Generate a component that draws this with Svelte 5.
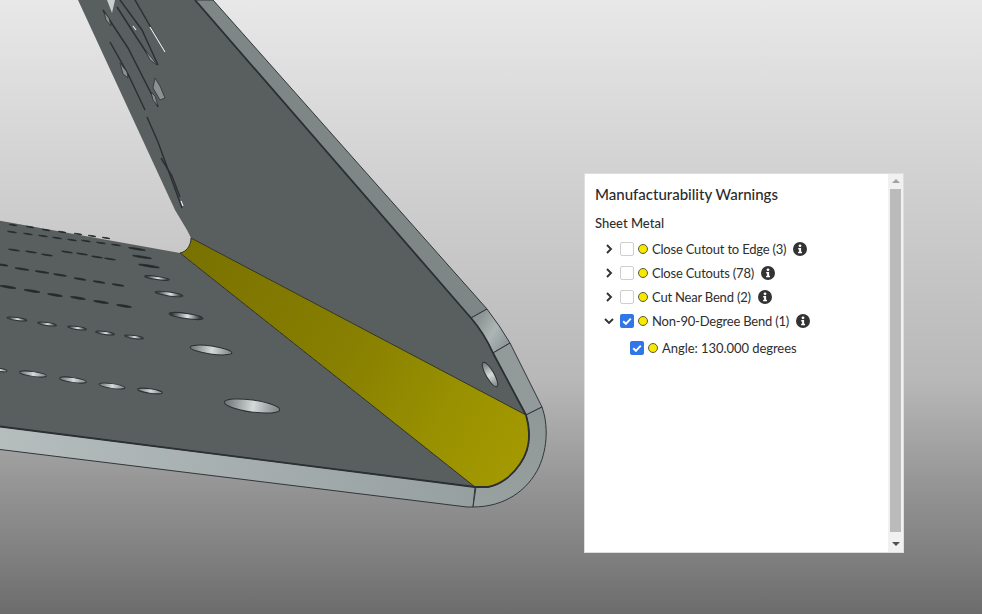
<script>
  // wider holes in the flat plate: [cx, cy, rx, ry]
  const bigHoles = [
    [252, 406, 28, 6],
    [211, 350, 21, 4],
    [33, 374, 13.5, 2.4],
    [73, 380, 13.5, 2.4],
    [112, 386, 13, 2.4],
    [150, 391, 12.5, 2.2],
    [0, 370, 7, 1.6]
  ];

  // narrow ones, mostly dark with a bright streak
  const thinHoles = [
    [186, 316, 17, 2.6],
    [169, 294, 14, 1.9],
    [157, 278, 12.5, 1.6],
    [17, 319, 10, 1.5],
    [47, 324, 9.5, 1.5],
    [77, 328, 9.5, 1.5],
    [105, 333, 9.5, 1.5],
    [134, 337, 9.5, 1.5]
  ];

  const slits = [
    [149, 266, 10.5, 0.9],
    [142, 257, 9.5, 0.8],
    [137, 249, 8.5, 0.7],
    [124, 306, 7.5, 0.9],
    [101, 302, 7.5, 0.9],
    [78, 298, 7.5, 0.9],
    [55, 295, 7.5, 0.9],
    [32, 291, 8, 0.9],
    [8, 287, 8, 0.9],
    [118, 285, 6, 0.7],
    [99, 282, 6, 0.7],
    [80, 279, 6, 0.7],
    [60, 275, 6.5, 0.7],
    [42, 272, 7, 0.7],
    [22, 269, 7, 0.7],
    [3, 265, 5, 0.7],
    [110, 259, 5.5, 0.5],
    [97, 257, 5.5, 0.5],
    [82, 254, 5.5, 0.5],
    [67, 252, 5.5, 0.5],
    [47, 255, 5.5, 0.5],
    [31, 252, 5.5, 0.5],
    [14, 250, 5.5, 0.5],
    [116, 245, 4.5, 0.4],
    [101, 243, 4.5, 0.4],
    [86, 241, 4.5, 0.4],
    [72, 240, 4.5, 0.4],
    [57, 238, 4.5, 0.4],
    [43, 236, 4.5, 0.4],
    [28, 234, 4.5, 0.4],
    [12, 232, 4.5, 0.4],
    [106, 238, 4, 0.4],
    [92, 236, 4, 0.4],
    [78, 234, 4, 0.4],
    [62, 232, 4, 0.4],
    [46, 230, 4, 0.4],
    [30, 227, 4, 0.4],
    [13, 225, 4, 0.4]
  ];

  // cut-outs seen edge-on in the raised flange
  const cutLines = [
    "M120 0 L142 30 L158 65",
    "M117 7 L135 35 L150 58",
    "M103 10 L128 48 L158 107",
    "M110 42 L128 74 L145 110",
    "M147 117 L158 142 L182 208",
    "M161 158 L172 176 L180 197",
    "M135 0 L165 52"
  ];

  const cutBlobs = [
    "M155 78 L160 86 L165 98 L160 100 L153 88 Z",
    "M120 63 L127 72 L128 78 L123 74 Z",
    "M145 50 L152 58 L157 65 L150 60 Z",
    "M104 12 L109 18 L111 26 L106 20 Z",
    "M151 92 L155 96 L158 106 L153 100 Z"
  ];

  const warnings = [
    { label: "Close Cutout to Edge (3)", open: false, checked: false },
    { label: "Close Cutouts (78)", open: false, checked: false },
    { label: "Cut Near Bend (2)", open: false, checked: false },
    { label: "Non-90-Degree Bend (1)", open: true, checked: true }
  ];
</script>

<div class="viewport">
  <svg class="scene" width="982" height="614" viewBox="0 0 982 614" xmlns="http://www.w3.org/2000/svg">
    <defs>
      <linearGradient id="yellow" gradientUnits="userSpaceOnUse" x1="190" y1="250" x2="520" y2="440">
        <stop offset="0" stop-color="#7a7200" />
        <stop offset="0.5" stop-color="#888000" />
        <stop offset="0.78" stop-color="#989000" />
        <stop offset="1" stop-color="#a39800" />
      </linearGradient>
      <linearGradient id="hole" x1="0" y1="0" x2="1" y2="0">
        <stop offset="0" stop-color="#6b7070" />
        <stop offset="0.52" stop-color="#d4dada" />
        <stop offset="1" stop-color="#7b8181" />
      </linearGradient>
      <linearGradient id="thinHole" x1="0" y1="0" x2="1" y2="0">
        <stop offset="0.1" stop-color="#3a3e40" />
        <stop offset="0.55" stop-color="#dfe5e5" />
        <stop offset="0.9" stop-color="#3a3e40" />
      </linearGradient>
      <linearGradient id="strip" gradientUnits="userSpaceOnUse" x1="0" y1="430" x2="475" y2="495">
        <stop offset="0" stop-color="#b5bdbd" />
        <stop offset="1" stop-color="#97a0a0" />
      </linearGradient>
      <linearGradient id="bendTop" gradientUnits="userSpaceOnUse" x1="475" y1="325" x2="508" y2="345">
        <stop offset="0" stop-color="#8c9494" />
        <stop offset="0.5" stop-color="#adb5b5" />
        <stop offset="1" stop-color="#8c9494" />
      </linearGradient>
      <linearGradient id="corner" gradientUnits="userSpaceOnUse" x1="540" y1="410" x2="475" y2="505">
        <stop offset="0" stop-color="#8f9797" />
        <stop offset="1" stop-color="#99a1a1" />
      </linearGradient>
    </defs>

    <!-- raised flange -->
    <path class="face" d="M78 0 L195 0 L471 318 Q484 333 493 353 L526 415 L191 238 L187 230 L175 210 Z" />
    <path class="rim" fill="#7e8686" d="M195 0 L213 0 L487 309 L471 318 Z" />
    <path class="rim" fill="url(#bendTop)" d="M471 318 L487 309 Q500 326 510 343 L493 353 Q484 333 471 318 Z" />
    <path class="rim" fill="#929a9a" d="M493 353 L510 343 L542 407 L526 415 Z" />

    <!-- flat plate -->
    <path class="face" d="M-4 220 L180 253 L475 487 L-4 426 Z" />
    <path class="rim" fill="url(#strip)" d="M-4 426 L475 487 L473 507 L467 507 L-4 449 Z" />
    <path class="rim" fill="url(#corner)" d="M526 415 L542 407 C548 424 548 447 539 467 C528 490 505 507 473 507 L476 487 L488 487 C500 485 512 476 520 464 C530 450 531 432 526 415 Z" />

    <!-- selected bend -->
    <path class="bend" d="M191 238 L526 415 C531 432 530 450 520 464 C512 476 500 485 488 487 L475 487 L180 253 C186 252 191 246 191 238 Z" />

    <!-- heavier edges -->
    <path class="edge" d="M195 0 L471 318 Q484 333 493 353 L526 415" />
    <path class="edge" d="M-4 426 L475 487" />
    <path class="edge" d="M526 415 C531 432 530 450 520 464 C512 476 500 485 488 487 L475 487" />

    {#each bigHoles as [cx, cy, rx, ry]}
      <ellipse class="hole" {cx} {cy} {rx} {ry} transform="rotate(8 {cx} {cy})" />
    {/each}
    {#each thinHoles as [cx, cy, rx, ry]}
      <ellipse class="hole thin" {cx} {cy} {rx} {ry} transform="rotate(8 {cx} {cy})" />
    {/each}
    {#each slits as [cx, cy, rx, ry]}
      <ellipse class="slit" {cx} {cy} {rx} {ry} transform="rotate(9 {cx} {cy})" />
    {/each}
    {#each cutLines as d}
      <path class="cut-line" {d} />
    {/each}
    {#each cutBlobs as d}
      <path class="cut-blob" {d} />
    {/each}
    <path class="sliver" d="M107 0 L115 0 L112 13 Z" />
    <path class="glint" d="M150 27 L165 52 M133 26 L136 30 M181 201 L183 206" />
    <ellipse class="hole" cx="490" cy="374.5" rx="14" ry="4" transform="rotate(60 490 374.5)" />
  </svg>

  <div class="panel">
    <div class="content">
      <h2>Manufacturability Warnings</h2>
      <h3>Sheet Metal</h3>
      <ul>
        {#each warnings as w}
          <li class="row">
            <svg class="chevron" width="10" height="10" viewBox="0 0 10 10">
              {#if w.open}
                <path d="M1 3 L5 7 L9 3" />
              {:else}
                <path d="M3 1 L7 5 L3 9" />
              {/if}
            </svg>
            <span class="box" class:checked={w.checked}>
              {#if w.checked}
                <svg width="14" height="14" viewBox="0 0 14 14"><path d="M3.2 7.2 L5.9 9.8 L10.8 4.6" /></svg>
              {/if}
            </span>
            <span class="dot"></span>
            <span class="label">{w.label}</span>
            <svg class="info" width="14" height="14" viewBox="0 0 14 14">
              <circle cx="7" cy="7" r="7" />
              <circle class="i" cx="7" cy="3.8" r="1.4" />
              <path class="i" d="M5.2 6 H8.1 V9.7 H9 V11.2 H5.1 V9.7 H6.1 V7.4 H5.2 Z" />
            </svg>
          </li>
        {/each}
        <li class="row child">
          <span class="box checked">
            <svg width="14" height="14" viewBox="0 0 14 14"><path d="M3.2 7.2 L5.9 9.8 L10.8 4.6" /></svg>
          </span>
          <span class="dot"></span>
          <span class="label">Angle: 130.000 degrees</span>
        </li>
      </ul>
    </div>
    <div class="scrollbar">
      <span class="arrow up"></span>
      <span class="thumb"></span>
      <span class="arrow down"></span>
    </div>
  </div>
</div>

<style>
  :global(body) {
    margin: 0;
  }

  .viewport {
    position: relative;
    width: 982px;
    height: 614px;
    overflow: hidden;
    background: linear-gradient(to bottom, #e8e8e8 0, #d2d2d2 170px, #b8b8b8 380px, #909090 500px, #808080 555px, #6c6c6c 614px);
    font-family: Lato, "Open Sans", sans-serif;
  }

  .scene {
    display: block;
  }

  .face {
    fill: #595e5f;
  }

  .rim {
    stroke: #30363a;
    stroke-width: 1;
  }

  .bend {
    fill: url(#yellow);
    stroke: #2e3224;
    stroke-width: 1;
  }

  .edge {
    fill: none;
    stroke: #2c3033;
    stroke-width: 1.8;
  }

  .hole {
    fill: url(#hole);
    stroke: #2c3033;
    stroke-width: 1;
  }

  .hole.thin {
    fill: url(#thinHole);
  }

  .slit {
    fill: #26292b;
    stroke: #26292b;
    stroke-width: 0.7;
  }

  .cut-line {
    fill: none;
    stroke: #2c3033;
    stroke-width: 1.5;
  }

  .cut-blob {
    fill: #8c9292;
    stroke: #2c3033;
    stroke-width: 0.8;
  }

  .sliver {
    fill: #c6cece;
  }

  .glint {
    fill: none;
    stroke: #e6ecec;
    stroke-width: 1.2;
  }

  .panel {
    position: absolute;
    left: 584px;
    top: 173px;
    width: 320px;
    height: 380px;
    box-sizing: border-box;
    border: 1px solid #dedede;
    background: #fff;
    display: flex;
    color: #2e2e2e;
  }

  .content {
    flex: 1;
    padding: 12px 0 0 10px;
  }

  h2 {
    margin: 0;
    font-size: 15px;
    line-height: 16px;
    font-weight: 500;
    color: #2a2a2a;
  }

  h3 {
    margin: 13px 0 0;
    font-size: 13px;
    line-height: 16px;
    font-weight: 500;
    color: #2e2e2e;
  }

  ul {
    list-style: none;
    margin: 6px 0 0;
    padding: 0 0 0 9px;
  }

  .row {
    display: flex;
    align-items: center;
    height: 24px;
    font-size: 13px;
    letter-spacing: -0.2px;
  }

  .row.child {
    margin: 3px 0 0 26px;
    letter-spacing: -0.05px;
  }

  .chevron {
    margin-right: 6px;
    fill: none;
    stroke: #333;
    stroke-width: 1.9;
  }

  .box {
    box-sizing: border-box;
    width: 14px;
    height: 14px;
    border: 1px solid #cfcfcf;
    border-radius: 2px;
    background: #fff;
    margin-right: 4px;
  }

  .box.checked {
    border: none;
    background: #2f76e8;
  }

  .box svg {
    display: block;
    fill: none;
    stroke: #fff;
    stroke-width: 1.9;
  }

  .dot {
    box-sizing: border-box;
    width: 10px;
    height: 10px;
    border: 1px solid #5c5c3a;
    border-radius: 50%;
    background: #f6e800;
    margin-right: 4px;
  }

  .label {
    white-space: nowrap;
  }

  .info {
    margin-left: 7px;
  }

  .info circle {
    fill: #333;
  }

  .info .i {
    fill: #fff;
  }

  .scrollbar {
    width: 15px;
    background: #f1f1f1;
    display: flex;
    flex-direction: column;
    align-items: center;
  }

  .thumb {
    flex: 1;
    width: 11px;
    margin: 0 auto;
    background: #bbb;
  }

  .arrow {
    width: 0;
    height: 0;
    border-left: 4px solid transparent;
    border-right: 4px solid transparent;
  }

  .arrow.up {
    margin: 5px 0 6px;
    border-bottom: 4px solid #a3a3a3;
  }

  .arrow.down {
    margin: 10px 0 6px;
    border-top: 4px solid #505050;
  }
</style>
